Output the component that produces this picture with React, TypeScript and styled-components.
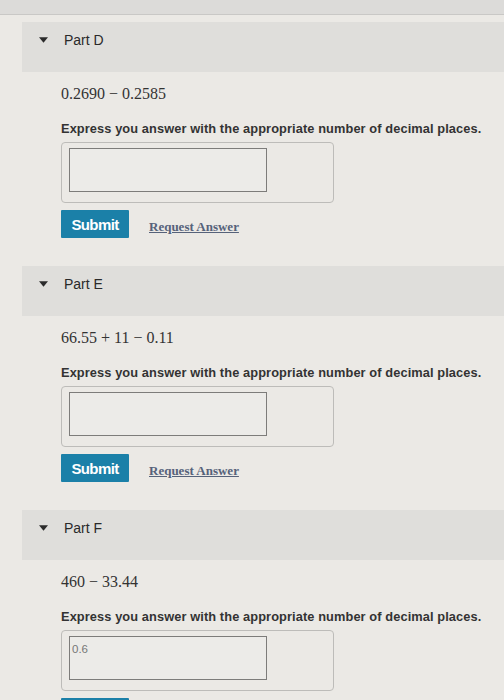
import React from 'react';
import styled, { createGlobalStyle } from 'styled-components';

const PARTS = [
  { label: 'Part D', expr: '0.2690 − 0.2585', value: '' },
  { label: 'Part E', expr: '66.55 + 11 − 0.11', value: '' },
  { label: 'Part F', expr: '460 − 33.44', value: '0.6' },
];

const GlobalStyle = createGlobalStyle`
  html, body {
    margin: 0;
    padding: 0;
    background: #ebe9e5;
    font-family: "Liberation Sans", Arial, sans-serif;
    color: #2b2b2b;
  }
`;

export default function App() {
  return (
    <Page>
      <GlobalStyle />
      <TopStrip />
      <Parts>
        {PARTS.map((part) => (
          <Part key={part.label}>
            <PartHeader>
              <Caret viewBox="0 0 10 6">
                <path d="M0 0 L10 0 L5 6 Z" fill="#2b2b2b" />
              </Caret>
              <PartTitle>{part.label}</PartTitle>
            </PartHeader>
            <PartBody>
              <Expression>{part.expr}</Expression>
              <Instruction>Express you answer with the appropriate number of decimal places.</Instruction>
              <AnswerFrame>
                <AnswerInput>{part.value}</AnswerInput>
              </AnswerFrame>
              <Actions>
                <SubmitButton>Submit</SubmitButton>
                <RequestLink>Request Answer</RequestLink>
              </Actions>
            </PartBody>
          </Part>
        ))}
      </Parts>
    </Page>
  );
}

const Page = styled.div`
  width: 504px;
  height: 700px;
  overflow: hidden;
  background: #ebe9e5;
`;

const TopStrip = styled.div`
  height: 14px;
  background: #dcdbd9;
  border-bottom: 1px solid #c9c8c6;
`;

const Parts = styled.div`
  display: flex;
  flex-direction: column;
  gap: 28px;
  padding-top: 7px;
  padding-left: 22px;
`;

const Part = styled.section`
  display: flex;
  flex-direction: column;
`;

const PartHeader = styled.div`
  height: 50px;
  display: flex;
  align-items: flex-start;
  gap: 16px;
  padding: 10px 0 0 17px;
  background: #dfdedb;
  box-sizing: border-box;
`;

const Caret = styled.svg`
  width: 9px;
  height: 6px;
  margin-top: 5px;
`;

const PartTitle = styled.span`
  font-size: 14px;
  line-height: 16px;
  color: #2a2a2a;
`;

const PartBody = styled.div`
  display: flex;
  flex-direction: column;
  align-items: flex-start;
  padding: 12px 0 0 39px;
`;

const Expression = styled.div`
  font-family: "Liberation Serif", "Times New Roman", serif;
  font-size: 16px;
  line-height: 20px;
  color: #333;
`;

const Instruction = styled.div`
  margin-top: 15px;
  font-size: 12.8px;
  line-height: 20px;
  font-weight: bold;
  color: #333;
  letter-spacing: 0.1px;
`;

const AnswerFrame = styled.div`
  margin-top: 3px;
  width: 273px;
  height: 61px;
  box-sizing: border-box;
  border: 1px solid #bdbcb9;
  border-radius: 4px;
  padding: 5px 7px;
`;

const AnswerInput = styled.div`
  width: 198px;
  height: 44px;
  box-sizing: border-box;
  border: 1px solid #7d7c7a;
  background: #ecebe8;
  padding: 6px 2px;
  font-size: 11.5px;
  color: #777;
`;

const Actions = styled.div`
  margin-top: 7px;
  display: flex;
  align-items: center;
  gap: 20px;
`;

const SubmitButton = styled.button`
  height: 28px;
  width: 68px;
  border: none;
  border-radius: 1px;
  background: #1b80a8;
  color: #fff;
  font-family: "Liberation Sans", Arial, sans-serif;
  font-weight: bold;
  font-size: 15px;
  letter-spacing: -0.6px;
  padding: 0;
`;

const RequestLink = styled.a`
  font-family: "Liberation Serif", "Times New Roman", serif;
  font-weight: bold;
  font-size: 13px;
  color: #56627a;
  text-decoration: underline;
  margin-top: 6px;
`;
